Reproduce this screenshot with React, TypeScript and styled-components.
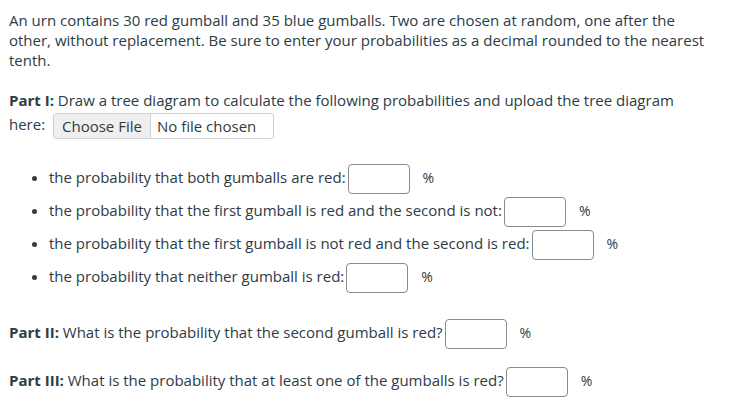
import React from "react";
import styled, { createGlobalStyle } from "styled-components";

const Global = createGlobalStyle`
  html, body { margin: 0; padding: 0; background: #fff; }
  body {
    font-family: "Open Sans", "Liberation Sans", sans-serif;
    font-size: 15px;
    color: #2d3b45;
  }
`;

const Page = styled.div`
  padding: 10px 30px 0 9px;
  width: 699px;
`;

const Para = styled.p<{ $top?: number; $lh?: number }>`
  margin: ${(p) => p.$top ?? 0}px 0 0 0;
  line-height: ${(p) => p.$lh ?? 20}px;
`;

const FileLine = styled.span`
  display: inline-flex;
  vertical-align: middle;
  margin-left: 4px;
  height: 26px;
  line-height: 20px;
  border: 1px solid #d0d0d0;
  border-radius: 3px;
  box-sizing: border-box;
  overflow: hidden;
`;

const FileButton = styled.span`
  display: inline-flex;
  align-items: center;
  padding: 0 8px;
  background: #efefef;
  border-right: 1px solid #d0d0d0;
`;

const FileName = styled.span`
  display: inline-flex;
  align-items: center;
  padding: 0 15px 0 6px;
  width: 101px;
`;

const List = styled.ul`
  margin: 22px 0 0 0;
  padding-left: 40px;
`;

const Item = styled.li`
  line-height: 33px;
`;

const Answer = styled.span`
  display: inline-block;
  width: 62px;
  height: 30px;
  box-sizing: border-box;
  border: 1px solid #8b8b8b;
  border-radius: 4px;
  vertical-align: middle;
  margin-left: 2px;
  background: #fff;
`;

const Percent = styled.span`
  margin-left: 13px;
  font-size: 14px;
  letter-spacing: -1px;
`;

const Question = styled.p<{ $top: number }>`
  margin: ${(p) => p.$top}px 0 0 0;
  line-height: 33px;
`;

const Blank = () => (
  <>
    <Answer />
    <Percent>%</Percent>
  </>
);

export default function App() {
  return (
    <>
      <Global />
      <Page>
        <Para>
          An urn contains 30 red gumball and 35 blue gumballs. Two are chosen at random, one after the
          other, without replacement. Be sure to enter your probabilities as a decimal rounded to the nearest
          tenth.
        </Para>
        <Para $top={18} $lh={24}>
          <b>Part I:</b> Draw a tree diagram to calculate the following probabilities and upload the tree diagram
          here:{" "}
          <FileLine>
            <FileButton>Choose File</FileButton>
            <FileName>No file chosen</FileName>
          </FileLine>
        </Para>
        <List>
          <Item>
            the probability that both gumballs are red:
            <Blank />
          </Item>
          <Item>
            the probability that the first gumball is red and the second is not:
            <Blank />
          </Item>
          <Item>
            the probability that the first gumball is not red and the second is red:
            <Blank />
          </Item>
          <Item>
            the probability that neither gumball is red:
            <Blank />
          </Item>
        </List>
        <Question $top={23}>
          <b>Part II:</b> What is the probability that the second gumball is red?
          <Blank />
        </Question>
        <Question $top={15}>
          <b>Part III:</b> What is the probability that at least one of the gumballs is red?
          <Blank />
        </Question>
      </Page>
    </>
  );
}
